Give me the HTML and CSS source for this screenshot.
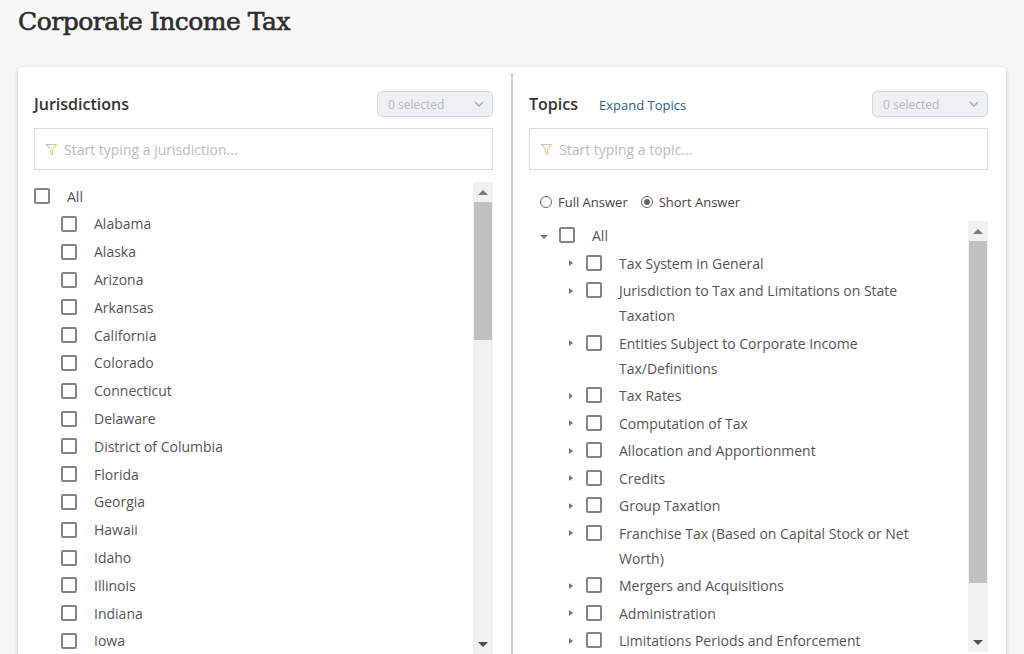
FILE: index.html
```html
<!DOCTYPE html>
<html lang="en">
<head>
    <meta charset="UTF-8">
    <meta name="viewport" content="width=device-width, initial-scale=1.0">
    <title>Corporate Income Tax</title>
    <link rel="stylesheet" href="styles.css">
</head>
<body>
    <h1 class="page-title">Corporate Income Tax</h1>
    <div class="card">
        <!-- jurisdictions -->
        <div class="panel">
            <div class="panel-head">
                <span class="panel-title">Jurisdictions</span>
                <div class="select-box">
                    <span>0 selected</span>
                    <svg class="chevron" viewBox="0 0 10 6"><path d="M1 1l4 4 4-4" fill="none" stroke="#a9b0b8" stroke-width="1.6"/></svg>
                </div>
            </div>
            <div class="search">
                <svg class="funnel" viewBox="0 0 14 14">
                    <defs>
                        <linearGradient id="fg1" x1="0" y1="0" x2="1" y2="1">
                            <stop offset="0" stop-color="#8fc3e8"/>
                            <stop offset="0.6" stop-color="#e9d27a"/>
                            <stop offset="1" stop-color="#e8a36b"/>
                        </linearGradient>
                    </defs>
                    <path d="M1.5 1.5h11l-4.3 5.2v5.6l-2.4-1.3V6.7z" fill="none" stroke="url(#fg1)" stroke-width="1.1" stroke-linejoin="round"/>
                </svg>
                <span class="placeholder">Start typing a jurisdiction...</span>
            </div>
            <div class="list-wrap left-list">
                <ul class="check-list">
                    <li class="row"><span class="box"></span>All</li>
                    <li class="row child"><span class="box"></span>Alabama</li>
                    <li class="row child"><span class="box"></span>Alaska</li>
                    <li class="row child"><span class="box"></span>Arizona</li>
                    <li class="row child"><span class="box"></span>Arkansas</li>
                    <li class="row child"><span class="box"></span>California</li>
                    <li class="row child"><span class="box"></span>Colorado</li>
                    <li class="row child"><span class="box"></span>Connecticut</li>
                    <li class="row child"><span class="box"></span>Delaware</li>
                    <li class="row child"><span class="box"></span>District of Columbia</li>
                    <li class="row child"><span class="box"></span>Florida</li>
                    <li class="row child"><span class="box"></span>Georgia</li>
                    <li class="row child"><span class="box"></span>Hawaii</li>
                    <li class="row child"><span class="box"></span>Idaho</li>
                    <li class="row child"><span class="box"></span>Illinois</li>
                    <li class="row child"><span class="box"></span>Indiana</li>
                    <li class="row child"><span class="box"></span>Iowa</li>
                    <li class="row child"><span class="box"></span>Kansas</li>
                </ul>
                <div class="scrollbar">
                    <span class="arrow up"></span>
                    <span class="thumb left-thumb"></span>
                    <span class="track-fill"></span>
                    <span class="arrow down"></span>
                </div>
            </div>
        </div>

        <div class="divider"></div>

        <!-- topics -->
        <div class="panel">
            <div class="panel-head">
                <span class="panel-title">Topics</span>
                <a class="expand-link">Expand Topics</a>
                <div class="select-box">
                    <span>0 selected</span>
                    <svg class="chevron" viewBox="0 0 10 6"><path d="M1 1l4 4 4-4" fill="none" stroke="#a9b0b8" stroke-width="1.6"/></svg>
                </div>
            </div>
            <div class="search">
                <svg class="funnel" viewBox="0 0 14 14">
                    <defs>
                        <linearGradient id="fg2" x1="0" y1="0" x2="1" y2="1">
                            <stop offset="0" stop-color="#8fc3e8"/>
                            <stop offset="0.6" stop-color="#e9d27a"/>
                            <stop offset="1" stop-color="#e8a36b"/>
                        </linearGradient>
                    </defs>
                    <path d="M1.5 1.5h11l-4.3 5.2v5.6l-2.4-1.3V6.7z" fill="none" stroke="url(#fg2)" stroke-width="1.1" stroke-linejoin="round"/>
                </svg>
                <span class="placeholder">Start typing a topic...</span>
            </div>
            <div class="answer-mode">
                <label class="radio"><span class="dot"></span>Full Answer</label>
                <label class="radio"><span class="dot checked"></span>Short Answer</label>
            </div>
            <div class="list-wrap right-list">
                <ul class="tree">
                    <li class="node"><span class="caret open"></span><span class="box"></span><span class="label">All</span></li>
                    <li class="node child"><span class="caret"></span><span class="box"></span><span class="label">Tax System in General</span></li>
                    <li class="node child"><span class="caret"></span><span class="box"></span><span class="label">Jurisdiction to Tax and Limitations on State Taxation</span></li>
                    <li class="node child"><span class="caret"></span><span class="box"></span><span class="label">Entities Subject to Corporate Income Tax/Definitions</span></li>
                    <li class="node child"><span class="caret"></span><span class="box"></span><span class="label">Tax Rates</span></li>
                    <li class="node child"><span class="caret"></span><span class="box"></span><span class="label">Computation of Tax</span></li>
                    <li class="node child"><span class="caret"></span><span class="box"></span><span class="label">Allocation and Apportionment</span></li>
                    <li class="node child"><span class="caret"></span><span class="box"></span><span class="label">Credits</span></li>
                    <li class="node child"><span class="caret"></span><span class="box"></span><span class="label">Group Taxation</span></li>
                    <li class="node child"><span class="caret"></span><span class="box"></span><span class="label">Franchise Tax (Based on Capital Stock or Net Worth)</span></li>
                    <li class="node child"><span class="caret"></span><span class="box"></span><span class="label">Mergers and Acquisitions</span></li>
                    <li class="node child"><span class="caret"></span><span class="box"></span><span class="label">Administration</span></li>
                    <li class="node child"><span class="caret"></span><span class="box"></span><span class="label">Limitations Periods and Enforcement</span></li>
                    <li class="node child"><span class="caret"></span><span class="box"></span><span class="label">Miscellaneous</span></li>
                </ul>
                <div class="scrollbar">
                    <span class="arrow up"></span>
                    <span class="thumb right-thumb"></span>
                    <span class="track-fill"></span>
                    <span class="arrow down"></span>
                </div>
            </div>
        </div>
    </div>
</body>
</html>
```

FILE: styles.css
```css
body {
    font-family: "Open Sans", "Noto Sans", sans-serif;
    background-color: #f7f7f7;
    color: #555;
    margin: 0;
    padding: 0 18px;
    height: 654px;
    overflow: hidden;
}
.page-title {
    font-family: "DejaVu Serif", "Liberation Serif", serif;
    font-size: 25px;
    font-weight: normal;
    color: #2e2e2e;
    margin: 0;
    padding-top: 6px;
    height: 61px;
    line-height: 32px;
    letter-spacing: -0.5px;
    -webkit-text-stroke: 0.6px #2e2e2e;
}
.card {
    background: #fff;
    border-radius: 4px;
    box-shadow: 0 1px 4px rgba(0, 0, 0, 0.22);
    display: flex;
    height: 620px;
}
.panel {
    flex: 1;
    padding: 24px 18px 0 16px;
    min-width: 0;
}
.divider {
    width: 2px;
    background: #cfcfcf;
    margin-top: 6px;
}
.panel-head {
    display: flex;
    align-items: center;
    height: 26px;
}
.panel-title {
    font-size: 16px;
    font-weight: 600;
    color: #333;
}
.expand-link {
    font-size: 13px;
    color: #2f5d8a;
    margin-left: 21px;
    margin-top: 1px;
}
.select-box {
    margin-left: auto;
    width: 116px;
    height: 26px;
    box-sizing: border-box;
    background: #eef1f4;
    border: 1px solid #d3d8dd;
    border-radius: 5px;
    display: flex;
    align-items: center;
    justify-content: space-between;
    padding: 0 8px 0 10px;
    font-size: 12px;
    color: #b2b8be;
}
.chevron {
    width: 10px;
    height: 6px;
}
.search {
    margin-top: 11px;
    height: 42px;
    box-sizing: border-box;
    border: 1px solid #dcdcdc;
    display: flex;
    align-items: center;
    padding-left: 10px;
    gap: 6px;
}
.funnel {
    width: 13px;
    height: 13px;
}
.placeholder {
    font-size: 14px;
    color: #bcbcbc;
}
.list-wrap {
    display: flex;
    overflow: hidden;
}
.left-list {
    margin-top: 12px;
    height: 472px;
}
.right-list {
    margin-top: 9px;
    height: 431px;
}
.check-list, .tree {
    list-style: none;
    margin: 0;
    padding: 0;
    flex: 1;
    font-size: 14px;
    color: #555;
}
.check-list {
    padding-top: 0.3px;
}
.row {
    display: flex;
    align-items: center;
    height: 27.8px;
    gap: 17px;
}
.row.child {
    padding-left: 27px;
}
.box {
    width: 16px;
    height: 16px;
    box-sizing: border-box;
    border: 2px solid #858585;
    border-radius: 2px;
    flex-shrink: 0;
}
.scrollbar {
    width: 20px;
    background: #f1f1f1;
    display: flex;
    flex-direction: column;
    flex-shrink: 0;
}
.arrow {
    height: 20px;
    display: flex;
    justify-content: center;
    align-items: center;
    flex-shrink: 0;
}
.arrow::before {
    content: "";
    border-left: 5px solid transparent;
    border-right: 5px solid transparent;
}
.arrow.up::before {
    border-bottom: 5px solid #7a7a7a;
}
.arrow.down::before {
    border-top: 5px solid #505050;
}
.thumb {
    background: #c1c1c1;
    margin: 0 1px;
    flex-shrink: 0;
}
.left-thumb {
    height: 138px;
}
.right-thumb {
    height: 342px;
}
.track-fill {
    flex: 1;
}
.answer-mode {
    display: flex;
    align-items: center;
    gap: 13px;
    font-size: 13px;
    color: #444;
    padding-left: 11px;
    margin-top: 22px;
    height: 20px;
}
.radio {
    display: flex;
    align-items: center;
    gap: 6px;
}
.dot {
    width: 12px;
    height: 12px;
    box-sizing: border-box;
    border: 1px solid #666;
    border-radius: 50%;
    display: flex;
    justify-content: center;
    align-items: center;
}
.dot.checked::after {
    content: "";
    width: 6px;
    height: 6px;
    border-radius: 50%;
    background: #666;
}
.tree {
    padding-top: 1px;
    padding-right: 20px;
}
.node {
    display: flex;
    align-items: flex-start;
    line-height: 25px;
    padding: 1.25px 0;
    padding-left: 10px;
}
.node.child {
    padding-left: 37px;
}
.caret {
    width: 10px;
    height: 25px;
    flex-shrink: 0;
    display: flex;
    justify-content: center;
    align-items: center;
    margin-right: 10px;
}
.caret::before {
    content: "";
    border-top: 3.5px solid transparent;
    border-bottom: 3.5px solid transparent;
    border-left: 4px solid #777;
}
.caret.open::before {
    border-left: 4.5px solid transparent;
    border-right: 4.5px solid transparent;
    border-top: 4.5px solid #777;
    border-bottom: 0;
    margin-top: 2px;
}
.node .box {
    margin-top: 4px;
    margin-right: 17px;
}
.label {
    flex: 1;
}
```
